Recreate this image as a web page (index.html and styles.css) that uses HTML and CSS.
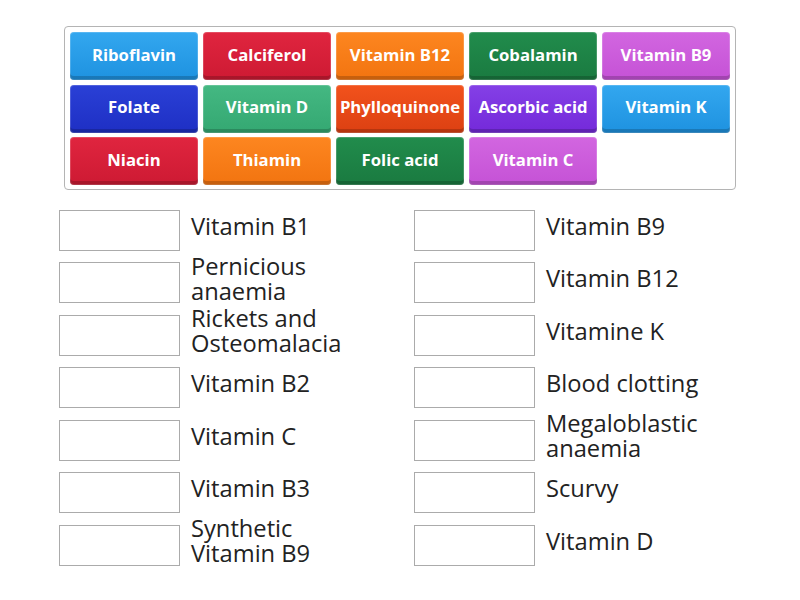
FILE: index.html
```html
<!DOCTYPE html>
<html>
<head>
<meta charset="utf-8">
<link rel="stylesheet" href="styles.css">
</head>
<body>
<div class="page">
  <div class="bank">
    <div class="tile c-blue">Riboflavin</div>
    <div class="tile c-red">Calciferol</div>
    <div class="tile c-orange">Vitamin B12</div>
    <div class="tile c-dgreen">Cobalamin</div>
    <div class="tile c-pink">Vitamin B9</div>
    <div class="tile c-navy">Folate</div>
    <div class="tile c-green">Vitamin D</div>
    <div class="tile c-rorange">Phylloquinone</div>
    <div class="tile c-purple">Ascorbic acid</div>
    <div class="tile c-blue">Vitamin K</div>
    <div class="tile c-red">Niacin</div>
    <div class="tile c-orange">Thiamin</div>
    <div class="tile c-dgreen">Folic acid</div>
    <div class="tile c-pink">Vitamin C</div>
  </div>
  <div class="targets">
    <div class="col">
      <div class="row"><div class="slot"></div><div class="label">Vitamin B1</div></div>
      <div class="row"><div class="slot"></div><div class="label">Pernicious anaemia</div></div>
      <div class="row"><div class="slot"></div><div class="label">Rickets and Osteomalacia</div></div>
      <div class="row"><div class="slot"></div><div class="label">Vitamin B2</div></div>
      <div class="row"><div class="slot"></div><div class="label">Vitamin C</div></div>
      <div class="row"><div class="slot"></div><div class="label">Vitamin B3</div></div>
      <div class="row"><div class="slot"></div><div class="label">Synthetic Vitamin B9</div></div>
    </div>
    <div class="col">
      <div class="row"><div class="slot"></div><div class="label">Vitamin B9</div></div>
      <div class="row"><div class="slot"></div><div class="label">Vitamin B12</div></div>
      <div class="row"><div class="slot"></div><div class="label">Vitamine K</div></div>
      <div class="row"><div class="slot"></div><div class="label">Blood clotting</div></div>
      <div class="row"><div class="slot"></div><div class="label">Megaloblastic anaemia</div></div>
      <div class="row"><div class="slot"></div><div class="label">Scurvy</div></div>
      <div class="row"><div class="slot"></div><div class="label">Vitamin D</div></div>
    </div>
  </div>
</div>
</body>
</html>
```
FILE: styles.css
```css
html, body {
  margin: 0;
  padding: 0;
  background: #fff;
  font-family: "Open Sans", "Liberation Sans", sans-serif;
}
.page {
  width: 800px;
  height: 600px;
  padding-top: 26px;
  box-sizing: border-box;
}
.bank {
  margin-left: 64px;
  width: 672px;
  height: 164px;
  box-sizing: border-box;
  border: 1px solid #b4b4b4;
  border-radius: 4px;
  padding: 5px 5px 4px 5px;
  display: grid;
  grid-template-columns: repeat(5, 128px);
  grid-auto-rows: 48px;
  column-gap: 5px;
  row-gap: 4.5px;
}
.tile {
  border-radius: 4px;
  color: #fff;
  font-weight: 700;
  font-size: 16.7px;
  display: flex;
  align-items: center;
  justify-content: center;
  padding-bottom: 4px;
  box-sizing: border-box;
  white-space: nowrap;
  box-shadow: inset 0 -4px 0 rgba(0,0,0,0.18), inset 0 0 0 1px rgba(255,255,255,0.18);
}
.c-blue { background: linear-gradient(#33a7ef, #1e92e0); }
.c-red { background: linear-gradient(#e0253f, #cd1a33); }
.c-orange { background: linear-gradient(#fd8620, #f27410); }
.c-dgreen { background: linear-gradient(#218c4c, #1a7a40); }
.c-pink { background: linear-gradient(#d266e0, #c552d6); }
.c-navy { background: linear-gradient(#2a40d6, #1e2fc4); }
.c-green { background: linear-gradient(#44b882, #34a872); }
.c-rorange { background: linear-gradient(#f2521c, #dc4012); }
.c-purple { background: linear-gradient(#8440e6, #7429da); }

.targets {
  display: flex;
  margin-top: 14px;
  margin-left: 59px;
}
.col {
  width: 355px;
  display: flex;
  flex-direction: column;
}
.row {
  height: 52.5px;
  display: flex;
  align-items: center;
}
.slot {
  width: 121px;
  height: 41px;
  box-sizing: border-box;
  border: 1px solid #ababab;
  background: #fff;
  flex: none;
}
.label {
  margin-left: 11px;
  width: 175px;
  font-size: 23.7px;
  line-height: 25px;
  color: #222;
  margin-top: -8px;
}
```
